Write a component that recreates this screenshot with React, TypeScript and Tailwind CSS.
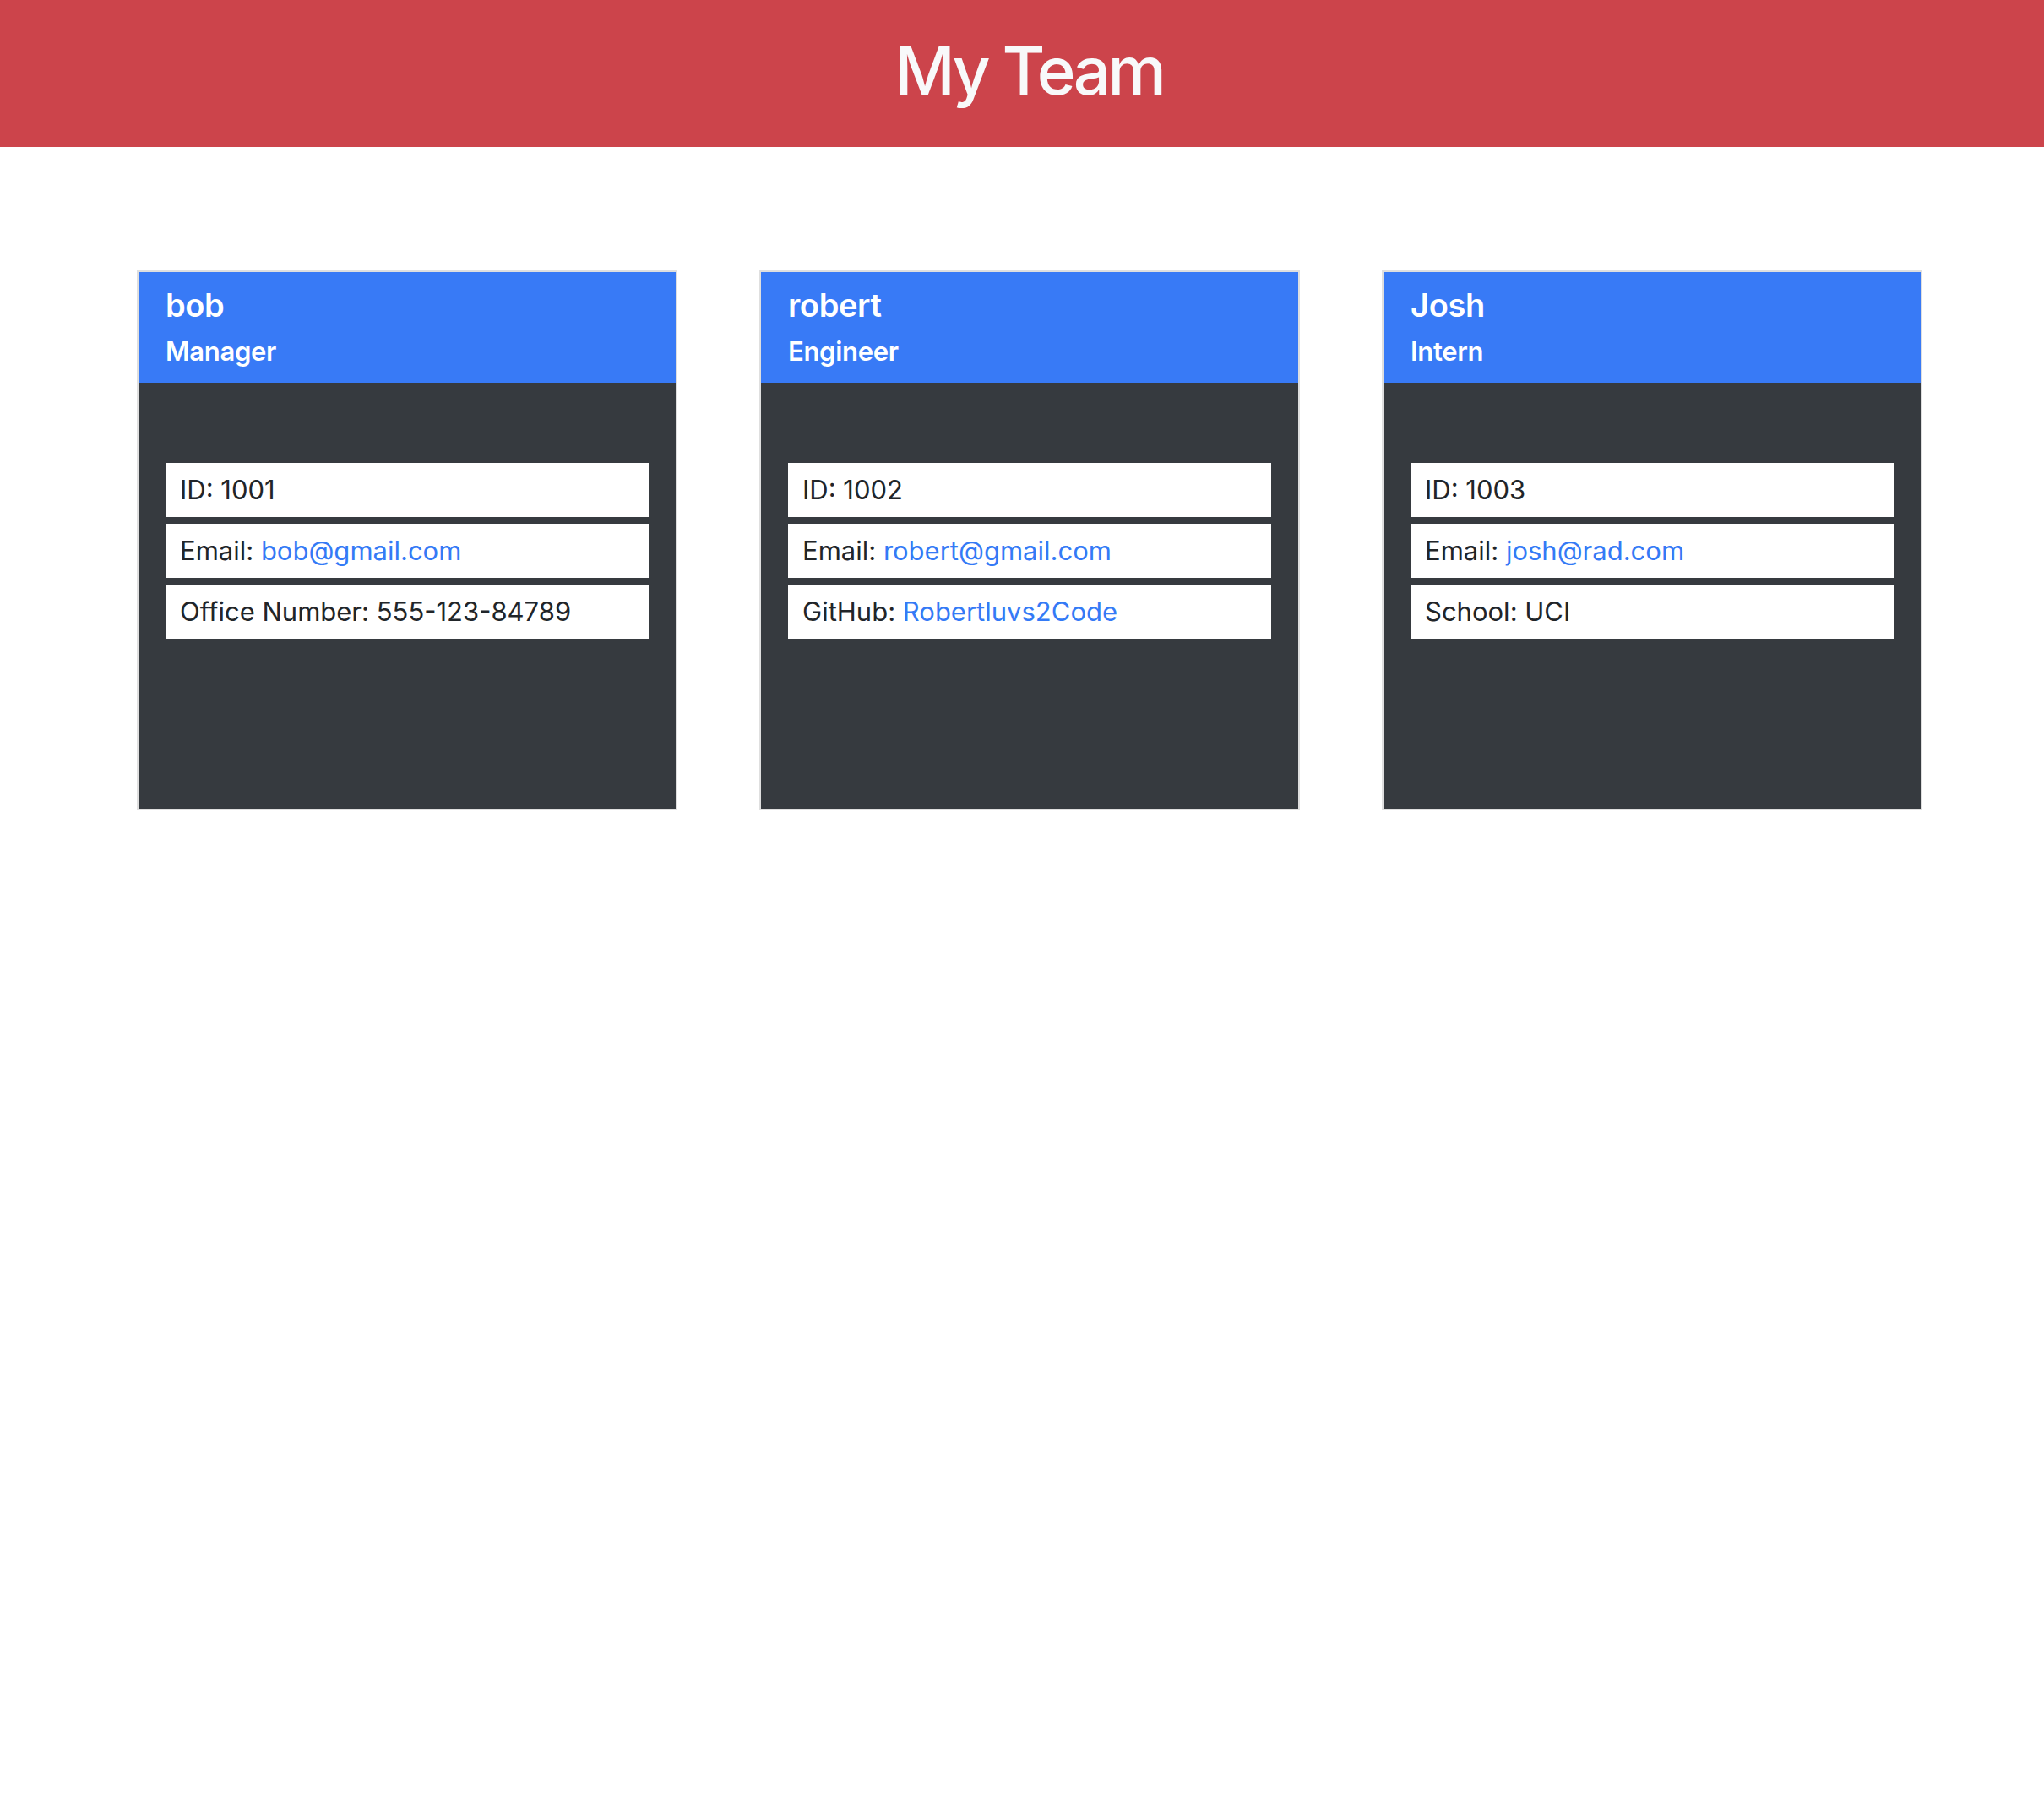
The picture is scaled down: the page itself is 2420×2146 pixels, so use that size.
import React from 'react';

type Member = {
  name: string;
  role: string;
  id: string;
  email: string;
  extra: { label: string; value: string; link?: boolean };
};

const team: Member[] = [
  {
    name: 'bob',
    role: 'Manager',
    id: '1001',
    email: 'bob@gmail.com',
    extra: { label: 'Office Number', value: '555-123-84789' },
  },
  {
    name: 'robert',
    role: 'Engineer',
    id: '1002',
    email: 'robert@gmail.com',
    extra: { label: 'GitHub', value: 'Robertluvs2Code', link: true },
  },
  {
    name: 'Josh',
    role: 'Intern',
    id: '1003',
    email: 'josh@rad.com',
    extra: { label: 'School', value: 'UCI' },
  },
];

function Row({ children }: { children: React.ReactNode }) {
  return (
    <li className="flex h-[64px] items-center bg-white pl-[17px] text-[31px] leading-[1.2] text-[#212529]">
      {children}
    </li>
  );
}

function MemberCard({ member }: { member: Member }) {
  return (
    <div className="flex h-[639px] w-[640px] flex-col border-2 border-[#dfdfdf]">
      <div className="h-[131px] bg-[#387af6] px-[32px] pt-[17px] text-white">
        <h4 className="text-[38px] font-semibold leading-[1.2] tracking-[-0.01em]">{member.name}</h4>
        <h5 className="mt-[12px] text-[31px] font-semibold leading-[1.2] tracking-[-0.01em]">
          {member.role}
        </h5>
      </div>
      <div className="flex-1 bg-[#363a3f] px-[32px] pt-[95px]">
        <ul className="flex flex-col gap-[8px]">
          <Row>ID: {member.id}</Row>
          <Row>
            Email:&nbsp;<a className="text-[#347af6]">{member.email}</a>
          </Row>
          <Row>
            {member.extra.label}:&nbsp;
            {member.extra.link ? (
              <a className="text-[#347af6]">{member.extra.value}</a>
            ) : (
              member.extra.value
            )}
          </Row>
        </ul>
      </div>
    </div>
  );
}

export default function App() {
  return (
    <div
      className="min-h-[2146px] bg-white"
      style={{ fontFamily: 'Inter, "Noto Sans", sans-serif' }}
    >
      <header className="flex h-[174px] items-center justify-center bg-[#cc444b] pb-[6px] pl-[17px]">
        <h1 className="text-[78px] font-medium leading-[1.2] tracking-[-0.045em] text-[#f8f9fa]">
          My Team
        </h1>
      </header>
      <main className="flex gap-[97px] pl-[162px] pt-[146px]">
        {team.map((m) => (
          <MemberCard key={m.id} member={m} />
        ))}
      </main>
    </div>
  );
}
